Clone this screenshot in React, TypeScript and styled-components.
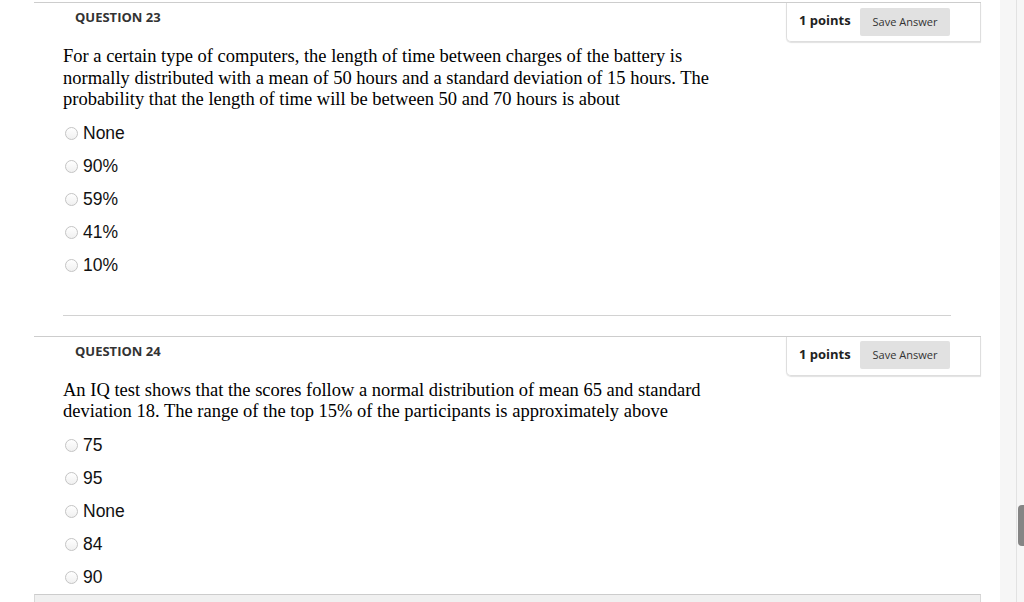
import React from "react";
import styled, { createGlobalStyle } from "styled-components";

const Global = createGlobalStyle`
  html, body { margin: 0; padding: 0; background: #fff; }
  body { width: 1024px; height: 602px; overflow: hidden; }
  * { box-sizing: border-box; }
`;

const Page = styled.div`
  display: flex;
  width: 1024px;
  height: 602px;
  overflow: hidden;
`;

const Main = styled.div`
  width: 1000px;
  padding: 2px 19px 0 34px;
  display: flex;
  flex-direction: column;
`;

const Side = styled.div`
  width: 24px;
  display: flex;
  background: #f6f6f6;
`;

const SidePane = styled.div`
  width: 17px;
  border-right: 1px solid #e2e2e2;
`;

const Track = styled.div`
  flex: 1;
  padding: 505px 0 0 1px;
`;

const Thumb = styled.div`
  height: 41px;
  background: #858585;
  border-radius: 4px 0 0 4px;
`;

const Block = styled.section<{ $gap?: number }>`
  border-top: 1px solid #cdcdcd;
  margin-top: ${(p) => p.$gap ?? 0}px;
`;

const Header = styled.div`
  display: flex;
  justify-content: space-between;
  align-items: flex-start;
`;

const Title = styled.h2`
  margin: 0;
  padding: 5px 0 0 41px;
  font: 700 13px/18px "Open Sans", "Liberation Sans", sans-serif;
  color: #333;
`;

const PointsBox = styled.div`
  width: 195px;
  height: 39px;
  display: flex;
  align-items: center;
  justify-content: space-between;
  padding: 0 30px 1px 12px;
  border: 1px solid #dedede;
  border-top: none;
  border-radius: 0 0 0 5px;
  box-shadow: 0 1px 1px rgba(0, 0, 0, 0.12);
`;

const Points = styled.span`
  margin-bottom: 3px;
  font: 700 13px/18px "Open Sans", "Liberation Sans", sans-serif;
  color: #222;
`;

const SaveButton = styled.button`
  width: 90px;
  height: 28px;
  border: none;
  border-radius: 2px;
  background: #e1e1e1;
  font: 400 11px/14px "Open Sans", "Liberation Sans", sans-serif;
  color: #333;
  padding: 0;
`;

const Body = styled.div`
  padding: 0 30px 0 29px;
`;

const Prompt = styled.p<{ $top: number }>`
  margin: ${(p) => p.$top}px 0 6px;
  width: 680px;
  font: 400 18.5px/21.5px "Liberation Serif", "Times New Roman", serif;
  color: #000;
`;

const Options = styled.div`
  display: flex;
  flex-direction: column;
`;

const Option = styled.label`
  height: 33px;
  display: flex;
  align-items: center;
  gap: 5px;
  padding-left: 2px;
  font: 400 17.5px/20px "Liberation Sans", Arial, sans-serif;
  color: #111;
`;

const Radio = styled.span`
  width: 13px;
  height: 13px;
  border-radius: 50%;
  border: 1px solid #c4c4c4;
  background: linear-gradient(#fff, #f0f0f0);
  flex-shrink: 0;
`;

const Separator = styled.hr`
  margin: 33px 0 0;
  border: none;
  border-top: 1px solid #d2d2d2;
`;

const Footer = styled.div`
  width: 947px;
  height: 20px;
  border-top: 1px solid #cccccc;
  border-left: 1px solid #d8d8d8;
  border-right: 1px solid #d8d8d8;
  background: #f0f0f0;
`;

type Q = { n: number; text: string; options: string[]; top: number };

const questions: Q[] = [
  {
    n: 23,
    top: 4,
    text:
      "For a certain type of computers, the length of time between charges of the battery is normally distributed with a mean of 50 hours and a standard deviation of 15 hours. The probability that the length of time will be between 50 and 70 hours is about",
    options: ["None", "90%", "59%", "41%", "10%"],
  },
  {
    n: 24,
    top: 4,
    text:
      "An IQ test shows that the scores follow a normal distribution of mean 65 and standard deviation 18. The range of the top 15% of the participants is approximately above",
    options: ["75", "95", "None", "84", "90"],
  },
];

export default function App() {
  return (
    <>
      <Global />
      <Page>
        <Main>
          {questions.map((q, i) => (
            <Block key={q.n} $gap={i === 0 ? 0 : 20}>
              <Header>
                <Title>QUESTION {q.n}</Title>
                <PointsBox>
                  <Points>1 points</Points>
                  <SaveButton>Save Answer</SaveButton>
                </PointsBox>
              </Header>
              <Body>
                <Prompt $top={q.top}>{q.text}</Prompt>
                <Options>
                  {q.options.map((o) => (
                    <Option key={o}>
                      <Radio />
                      {o}
                    </Option>
                  ))}
                </Options>
                {i === 0 && <Separator />}
              </Body>
            </Block>
          ))}
          <Footer />
        </Main>
        <Side>
          <SidePane />
          <Track>
            <Thumb />
          </Track>
        </Side>
      </Page>
    </>
  );
}
